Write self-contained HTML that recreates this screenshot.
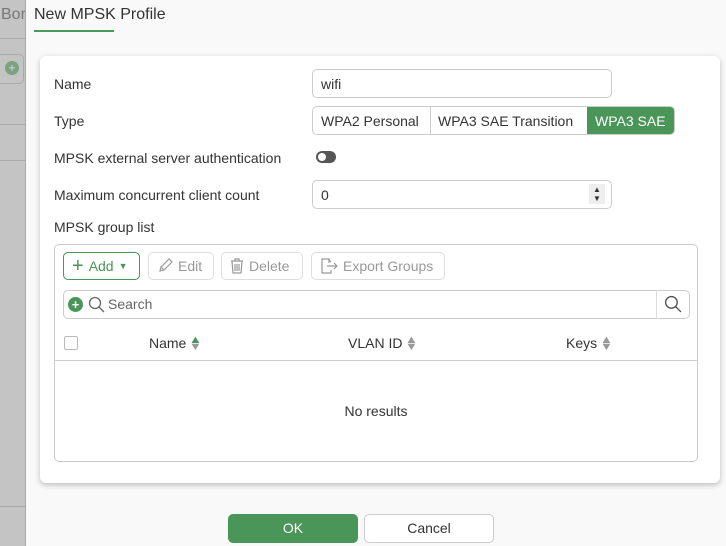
<!DOCTYPE html>
<html><head><meta charset="utf-8"><style>
*{box-sizing:border-box;margin:0;padding:0}
body{width:726px;height:546px;overflow:hidden;background:#f9f9f9;font-family:"Liberation Sans",sans-serif;font-size:14px;color:#333;position:relative}
.a{position:absolute}
.left{left:0;top:0;width:26px;height:546px;background:#c4c4c4;border-right:1px solid #aaa;overflow:hidden}
.hl{position:absolute;left:0;width:26px;height:1px;background:#a9a9a9}
.card{left:40px;top:56px;width:680px;height:427px;background:#fff;border-radius:6px;box-shadow:0 2px 6px rgba(0,0,0,.25)}
.lbl{left:54px;font-size:14px;color:#333}
.inp{border:1px solid #ccc;border-radius:5px;background:#fff}
.btn{border:1px solid #ddd;border-radius:5px;height:28px;color:#999;font-size:14px;display:flex;align-items:center;padding:0 8px;gap:5px;background:#fff}
.srt{font-size:11px;color:#999;line-height:7px;display:inline-block;vertical-align:middle;transform:scaleX(1.2)}
</style></head><body>
<div class="a left">
<div class="a" style="left:1px;top:6px;color:#777;font-size:16px">Bor</div>
<div class="hl" style="top:38px"></div>
<div class="a" style="left:-4px;top:54px;width:28px;height:30px;border:1px solid #aaa;border-radius:5px"></div>
<div class="a" style="left:5px;top:61px;width:14px;height:14px;border-radius:50%;background:#7aa37e;color:#c4c4c4;font-size:12px;line-height:14px;text-align:center;font-weight:bold">+</div>
<div class="hl" style="top:124px"></div>
<div class="hl" style="top:160px"></div>
<div class="hl" style="top:506px"></div>
</div>
<div class="a" style="left:34px;top:6px;font-size:16px;color:#333">New MPSK Profile</div>
<div class="a" style="left:34px;top:30px;width:80px;height:2px;background:#4a9a5c"></div>
<div class="a card"></div>
<div class="a lbl" style="top:76px">Name</div>
<div class="a lbl" style="top:113px">Type</div>
<div class="a lbl" style="top:150px">MPSK external server authentication</div>
<div class="a lbl" style="top:187px">Maximum concurrent client count</div>
<div class="a lbl" style="top:219px">MPSK group list</div>
<div class="a inp" style="left:312px;top:69px;width:300px;height:29px;padding:6px 8px">wifi</div>
<div class="a" style="left:312px;top:106px;width:363px;height:29px;display:flex;border:1px solid #ccc;border-radius:5px;overflow:hidden">
<div style="width:118px;padding:6px 0 6px 8px;border-right:1px solid #ccc">WPA2 Personal</div>
<div style="width:156px;padding:6px 0 6px 7px">WPA3 SAE Transition</div>
<div style="flex:1;padding:6px 0 6px 8px;background:#4a9558;color:#fff">WPA3 SAE</div>
</div>
<div class="a" style="left:316px;top:151px;width:20px;height:12px;border-radius:6px;background:#555"><div style="position:absolute;left:2px;top:2px;width:8px;height:8px;border-radius:50%;background:#fff"></div></div>
<div class="a inp" style="left:312px;top:180px;width:300px;height:29px;padding:6px 8px">0</div>
<div class="a" style="left:589px;top:184px;width:16px;height:20px;background:#eee;font-size:8px;line-height:9px;text-align:center;color:#333;padding-top:1px">▲<br>▼</div>
<div class="a" style="left:54px;top:244px;width:644px;height:218px;border:1px solid #ccc;border-radius:5px"></div>
<div class="a btn" style="left:63px;top:252px;width:77px;border-color:#4a9558;color:#4a9558"><span style="font-size:20px;font-weight:300;line-height:1">+</span>Add<span style="font-size:9px">▼</span></div>
<div class="a btn" style="left:148px;top:252px;width:66px"><svg width="16" height="16" viewBox="0 0 16 16" fill="none" stroke="#999" stroke-width="1.2"><path d="M3 13l1-4 8-8 3 3-8 8z M4 9l3 3"/></svg>Edit</div>
<div class="a btn" style="left:221px;top:252px;width:82px"><svg width="14" height="16" viewBox="0 0 14 16" fill="none" stroke="#999" stroke-width="1.2"><path d="M1 3h12M5 3V1h4v2M2 3l1 12h8l1-12M5 6v7M7 6v7M9 6v7"/></svg>Delete</div>
<div class="a btn" style="left:311px;top:252px;width:134px"><svg width="18" height="16" viewBox="0 0 18 16" fill="none" stroke="#999" stroke-width="1.2"><path d="M9 5V1H2v14h9v-3M8 1l3 3M7 8h10M14 5l3 3-3 3"/></svg>Export Groups</div>
<div class="a inp" style="left:63px;top:290px;width:627px;height:29px"></div>
<div class="a" style="left:656px;top:290px;width:1px;height:29px;background:#ddd"></div>
<div class="a" style="left:68px;top:297px;width:15px;height:15px;border-radius:50%;background:#4a9558;color:#fff;font-size:13px;line-height:15px;text-align:center;font-weight:bold">+</div>
<svg class="a" style="left:88px;top:296px" width="17" height="17" viewBox="0 0 17 17" fill="none" stroke="#666" stroke-width="1.3"><circle cx="7" cy="7" r="5.5"/><path d="M11 11l5 5"/></svg>
<div class="a" style="left:108px;top:296px;color:#666">Search</div>
<svg class="a" style="left:664px;top:295px" width="18" height="18" viewBox="0 0 17 17" fill="none" stroke="#555" stroke-width="1.3"><circle cx="7" cy="7" r="5.5"/><path d="M11 11l5 5"/></svg>
<div class="a" style="left:64px;top:336px;width:14px;height:14px;border:1px solid #bbb;border-radius:2px"></div>
<div class="a" style="left:149px;top:335px">Name <span class="srt" style="color:#4a9558">▲<br><span style="color:#999">▼</span></span></div>
<div class="a" style="left:348px;top:335px">VLAN ID <span class="srt">▲<br>▼</span></div>
<div class="a" style="left:566px;top:335px">Keys <span class="srt">▲<br>▼</span></div>
<div class="a" style="left:55px;top:360px;width:642px;height:1px;background:#ccc"></div>
<div class="a" style="left:0;width:752px;top:403px;text-align:center">No results</div>
<div class="a" style="left:228px;top:514px;width:130px;height:29px;background:#4a9558;color:#fff;border-radius:5px;text-align:center;line-height:29px">OK</div>
<div class="a" style="left:364px;top:514px;width:130px;height:29px;background:#fff;border:1px solid #ccc;color:#333;border-radius:5px;text-align:center;line-height:27px">Cancel</div>
</body></html>
